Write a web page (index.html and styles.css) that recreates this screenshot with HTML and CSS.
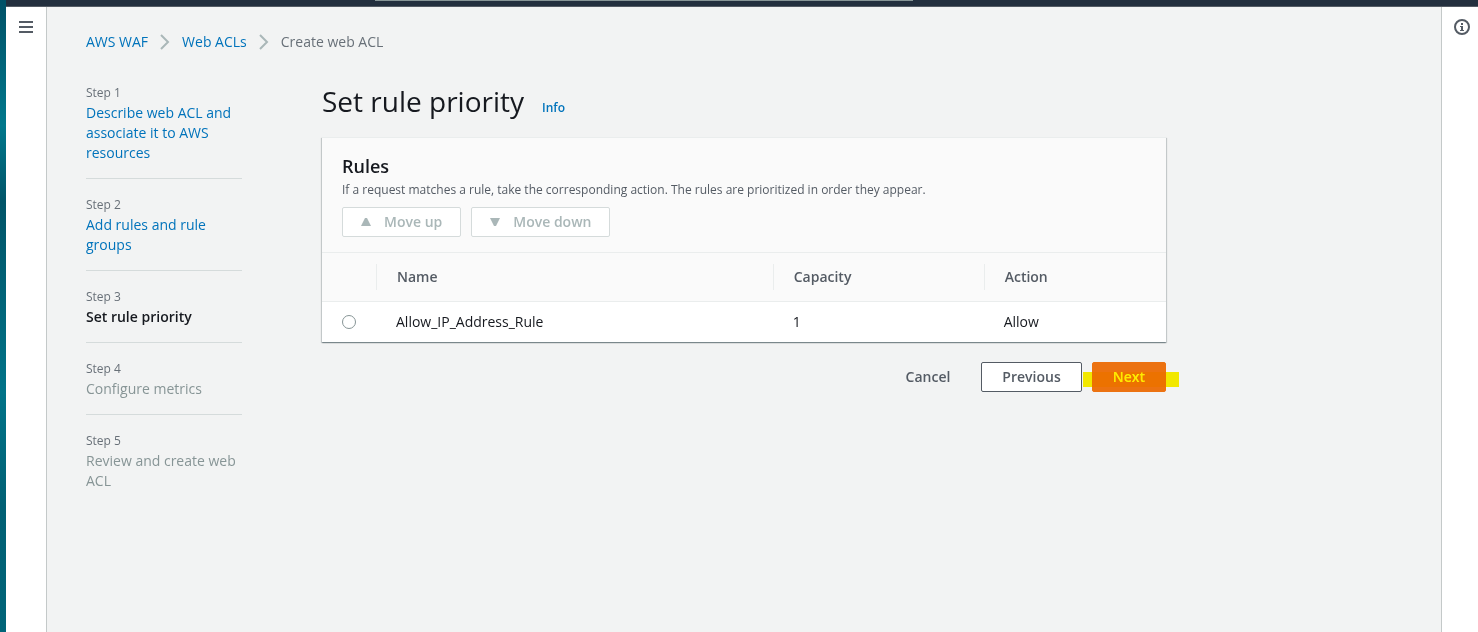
FILE: index.html
```html
<!DOCTYPE html>
<html lang="en">
<head>
    <meta charset="UTF-8">
    <meta name="viewport" content="width=device-width, initial-scale=1.0">
    <title>Create web ACL - AWS WAF</title>
    <link rel="stylesheet" href="styles.css">
</head>
<body>
    <header class="topbar">
        <div class="topbar__search"></div>
    </header>

    <div class="layout">
        <aside class="rail rail--left">
            <button type="button" class="rail__btn" aria-label="Open navigation">
                <svg width="14" height="12" viewBox="0 0 14 12" aria-hidden="true">
                    <path d="M0 1h14M0 6h14M0 11h14" stroke="currentColor" stroke-width="2"/>
                </svg>
            </button>
        </aside>

        <main class="content">
            <nav class="breadcrumb" aria-label="Breadcrumb">
                <a href="#">AWS WAF</a>
                <svg class="breadcrumb__sep" width="10" height="16" viewBox="0 0 10 16" aria-hidden="true">
                    <path d="M1 1l7 7-7 7" fill="none" stroke="currentColor" stroke-width="2"/>
                </svg>
                <a href="#">Web ACLs</a>
                <svg class="breadcrumb__sep" width="10" height="16" viewBox="0 0 10 16" aria-hidden="true">
                    <path d="M1 1l7 7-7 7" fill="none" stroke="currentColor" stroke-width="2"/>
                </svg>
                <span>Create web ACL</span>
            </nav>

            <div class="wizard">
                <ol class="steps">
                    <li class="step">
                        <span class="step__label">Step 1</span>
                        <a href="#">Describe web ACL and associate it to AWS resources</a>
                    </li>
                    <li class="step">
                        <span class="step__label">Step 2</span>
                        <a href="#">Add rules and rule groups</a>
                    </li>
                    <li class="step step--active" aria-current="step">
                        <span class="step__label">Step 3</span>
                        <span class="step__name">Set rule priority</span>
                    </li>
                    <li class="step step--disabled">
                        <span class="step__label">Step 4</span>
                        <span class="step__name">Configure metrics</span>
                    </li>
                    <li class="step step--disabled">
                        <span class="step__label">Step 5</span>
                        <span class="step__name">Review and create web ACL</span>
                    </li>
                </ol>

                <form class="wizard__form">
                    <div class="page-title">
                        <h1>Set rule priority</h1>
                        <a href="#">Info</a>
                    </div>

                    <section class="card">
                        <div class="card__header">
                            <h2>Rules</h2>
                            <p>If a request matches a rule, take the corresponding action. The rules are prioritized in order they appear.</p>
                            <div class="card__actions">
                                <button type="button" class="btn btn--move" disabled>
                                    <svg width="10" height="8" viewBox="0 0 10 8" aria-hidden="true"><path d="M4 0h2l4 8H0z" fill="currentColor"/></svg>
                                    Move up
                                </button>
                                <button type="button" class="btn btn--move" disabled>
                                    <svg width="10" height="8" viewBox="0 0 10 8" aria-hidden="true"><path d="M0 0h10L6 8H4z" fill="currentColor"/></svg>
                                    Move down
                                </button>
                            </div>
                        </div>
                        <table class="rules">
                            <thead>
                                <tr>
                                    <th class="rules__select" aria-label="Select"></th>
                                    <th class="rules__name"><div>Name</div></th>
                                    <th class="rules__capacity"><div>Capacity</div></th>
                                    <th><div>Action</div></th>
                                </tr>
                            </thead>
                            <tbody>
                                <tr>
                                    <td class="rules__select"><input type="radio" name="rule" id="rule-1"></td>
                                    <td><label for="rule-1">Allow_IP_Address_Rule</label></td>
                                    <td>1</td>
                                    <td>Allow</td>
                                </tr>
                            </tbody>
                        </table>
                    </section>

                    <div class="form-actions">
                        <button type="button" class="btn btn--link">Cancel</button>
                        <button type="button" class="btn btn--normal">Previous</button>
                        <div class="marked">
                            <button type="button" class="btn btn--primary">Next</button>
                        </div>
                    </div>
                </form>
            </div>
        </main>

        <aside class="rail rail--right">
            <button type="button" class="rail__btn" aria-label="Open help panel">
                <svg width="16" height="16" viewBox="0 0 16 16" aria-hidden="true">
                    <circle cx="8" cy="8" r="7" fill="none" stroke="currentColor" stroke-width="2"/>
                    <path d="M7 4h2v2H7zM6 7h3v4h1v1H6v-1h1V8H6z" fill="currentColor"/>
                </svg>
            </button>
        </aside>
    </div>
</body>
</html>
```
FILE: styles.css
```css
:root {
    --link: #0073bb;
    --text: #16191f;
    --text-secondary: #545b64;
    --text-muted: #687078;
    --disabled: #aab7b8;
    --border: #d5dbdb;
    --divider: #eaeded;
    --page: #f2f3f3;
    --orange: #ec7211;
    --font-family-base: 'Open Sans', 'Noto Sans', sans-serif;
}

* {
    box-sizing: border-box;
}

body {
    margin: 0;
    min-height: 100vh;
    display: flex;
    flex-direction: column;
    border-left: 6px solid #00677a;
    border-image: linear-gradient(#005066, #00788c 20%, #005468 32%, #007388 62%, #006074 80%, #006478) 1;
    font-family: var(--font-family-base);
    font-size: 14px;
    line-height: 20px;
    color: var(--text);
    background: var(--page);
}

a {
    color: var(--link);
    text-decoration: none;
}

a:hover {
    text-decoration: underline;
}

.topbar {
    height: 7px;
    background: #232f3e;
    border-bottom: 1px solid #545b64;
}

.topbar__search {
    width: 538px;
    max-width: 60%;
    height: 1px;
    margin-left: 369px;
    background: #879596;
}

.layout {
    flex: 1;
    display: grid;
    grid-template-columns: 41px 1fr 37px;
}

.rail {
    display: flex;
    align-items: flex-start;
    justify-content: center;
    padding-top: 12px;
    background: #fff;
}

.rail--left {
    border-right: 1px solid #c4c9c9;
}

.rail--right {
    border-left: 1px solid #c4c9c9;
    padding-left: 4px;
}

.rail__btn {
    display: flex;
    padding: 0;
    border: none;
    background: none;
    color: var(--text-secondary);
    cursor: pointer;
}

.rail--left .rail__btn {
    padding: 2px 0;
}

.content {
    padding: 25px 39px;
}

.breadcrumb {
    display: flex;
    align-items: center;
    gap: 12px;
    color: var(--text-muted);
}

.breadcrumb__sep {
    color: var(--disabled);
}

.wizard {
    display: grid;
    grid-template-columns: 156px 1fr;
    column-gap: 80px;
    max-width: 1080px;
    margin-top: 31px;
}

.steps {
    margin: 0;
    padding: 0;
    list-style: none;
}

.step {
    padding-bottom: 15px;
    margin-bottom: 16px;
    border-bottom: 1px solid var(--border);
}

.step:last-child {
    border-bottom: none;
}

.step__label,
.step__name {
    display: block;
}

.step__label {
    font-size: 12px;
    color: var(--text-muted);
}

.step--active .step__name {
    font-weight: 600;
}

.step--disabled .step__name {
    color: #879596;
}

.page-title {
    display: flex;
    align-items: baseline;
    gap: 18px;
    margin-bottom: 18px;
}

.page-title h1 {
    margin: 0;
    font-size: 28px;
    line-height: 36px;
    font-weight: 400;
}

.page-title a {
    font-size: 12px;
    font-weight: 600;
}

.card {
    background: #fff;
    border-top: 1px solid var(--divider);
    box-shadow: 0 1px 1px 0 rgba(0, 28, 36, 0.3), 1px 1px 1px 0 rgba(0, 28, 36, 0.15), -1px 1px 1px 0 rgba(0, 28, 36, 0.15);
}

.card__header {
    padding: 18px 20px 15px;
    background: #fafafa;
}

.card__header h2 {
    margin: 0;
    font-size: 18px;
    line-height: 20px;
    font-weight: 600;
}

.card__header p {
    margin: 3px 0 0;
    font-size: 12px;
    line-height: 22px;
    color: var(--text-secondary);
}

.card__actions {
    display: flex;
    gap: 10px;
    margin-top: 6px;
}

.btn {
    display: inline-flex;
    align-items: center;
    justify-content: center;
    height: 30px;
    padding: 0 20px;
    border: 1px solid transparent;
    border-radius: 2px;
    background: transparent;
    color: var(--text-secondary);
    font-family: inherit;
    font-size: 14px;
    line-height: 20px;
    font-weight: 600;
    cursor: pointer;
}

.btn--move {
    gap: 13px;
    padding: 0 18px;
    background: #fff;
    border-color: var(--border);
    color: var(--disabled);
    cursor: default;
}

.btn--normal {
    background: #fff;
    border-color: var(--text-secondary);
}

.btn--primary {
    background: var(--orange);
    border-color: var(--orange);
    color: #fff;
}

.rules {
    width: 100%;
    table-layout: fixed;
    border-collapse: collapse;
    text-align: left;
}

.rules thead {
    background: #fafafa;
    border-top: 1px solid var(--divider);
    border-bottom: 1px solid var(--divider);
    color: var(--text-secondary);
}

.rules th {
    padding: 11px 0;
    font-weight: 600;
}

.rules th div {
    padding: 3px 20px;
    border-left: 1px solid var(--divider);
}

.rules td {
    height: 40px;
    padding: 0 20px;
}

.rules__select {
    width: 54px;
}

.rules__name {
    width: 47%;
}

.rules__capacity {
    width: 25%;
}

.rules input {
    appearance: none;
    display: block;
    width: 14px;
    height: 14px;
    margin: 0;
    border: 1px solid #879596;
    border-radius: 50%;
    background: #fff;
}

.rules input:checked {
    border: 4px solid var(--link);
}

.form-actions {
    display: flex;
    justify-content: flex-end;
    gap: 10px;
    margin-top: 20px;
}

/* Highlighter stroke over the next button */
.marked {
    position: relative;
}

.marked::after {
    content: "";
    position: absolute;
    top: 10px;
    bottom: 5px;
    left: -9px;
    right: -13px;
    background: #ffe800;
    mix-blend-mode: darken;
    pointer-events: none;
}
```
